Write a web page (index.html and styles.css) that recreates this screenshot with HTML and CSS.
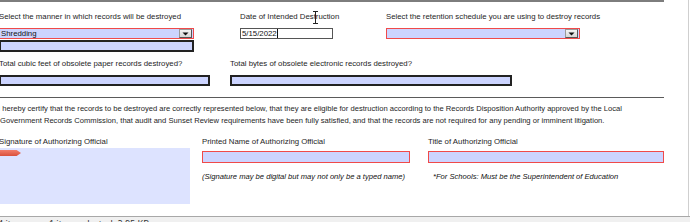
FILE: index.html
```html
<!DOCTYPE html>
<html>
<head>
<meta charset="utf-8">
<link rel="stylesheet" href="styles.css">
</head>
<body>
<div class="screen">
  <div class="sheet">
    <div class="rule top"></div>

    <div class="row row1">
      <div class="col c-manner">
        <div class="label">Select the manner in which records will be destroyed</div>
        <div class="select req">
          <span class="val">Shredding</span>
          <span class="btn"><svg width="7" height="4" viewBox="0 0 7 4"><path d="M0.5 0.5h6L3.5 3.5z" fill="#111"/></svg></span>
        </div>
        <div class="field dark tall"></div>
      </div>
      <div class="col c-date">
        <div class="label">Date of Intended Destruction</div>
        <div class="date"><span>5/15/2022</span><span class="caret"></span></div>
      </div>
      <div class="col c-sched">
        <div class="label">Select the retention schedule you are using to destroy records</div>
        <div class="select req">
          <span class="val"></span>
          <span class="btn"><svg width="7" height="4" viewBox="0 0 7 4"><path d="M0.5 0.5h6L3.5 3.5z" fill="#111"/></svg></span>
        </div>
      </div>
    </div>

    <div class="row row2">
      <div class="col c-cubic">
        <div class="label">Total cubic feet of obsolete paper records destroyed?</div>
        <div class="field dark"></div>
      </div>
      <div class="col c-bytes">
        <div class="label">Total bytes of obsolete electronic records destroyed?</div>
        <div class="field dark"></div>
      </div>
    </div>

    <div class="rule mid"></div>

    <p class="cert">I hereby certify that the records to be destroyed are correctly represented below, that they are eligible for destruction according to the Records Disposition Authority approved by the Local<br>Government Records Commission, that audit and Sunset Review requirements have been fully satisfied, and that the records are not required for any pending or imminent litigation.</p>

    <div class="row row3">
      <div class="col c-sig">
        <div class="label">Signature of Authorizing Official</div>
        <div class="sigbox"><span class="flag"></span></div>
      </div>
      <div class="col c-name">
        <div class="label">Printed Name of Authorizing Official</div>
        <div class="field req"></div>
        <div class="note">(Signature may be digital but may not only be a typed name)</div>
      </div>
      <div class="col c-title">
        <div class="label">Title of Authorizing Official</div>
        <div class="field req"></div>
        <div class="note ind">*For Schools: Must be the Superintendent of Education</div>
      </div>
    </div>
  </div>

  <div class="edge"></div>

  <div class="status">
    <span class="s1">4 items</span>
    <span class="s2">1 item selected&nbsp; 2.95 KB</span>
  </div>

  <svg class="ibeam" width="7" height="13" viewBox="0 0 7 13"><path d="M1 0.5h5M1 12.5h5M3.5 0.5v12" stroke="#222" stroke-width="1" fill="none"/></svg>
</div>
</body>
</html>
```
FILE: styles.css
```css
html, body {
  margin: 0;
  padding: 0;
  background: #fff;
}
.screen {
  position: relative;
  width: 690px;
  height: 222px;
  overflow: hidden;
  background: #fff;
  font-family: "Liberation Sans", Arial, sans-serif;
  color: #1e1e1e;
}
.sheet {
  margin-left: -1px;
  width: 665px;
}
.rule {
  width: 665px;
  background: #7d7d7d;
}
.rule.top { height: 2px; }
.rule.mid {
  height: 1px;
  background: #5a5a5a;
  margin-top: 11px;
}
.row {
  display: flex;
  align-items: flex-start;
}
.col {
  display: flex;
  flex-direction: column;
}
.label {
  font-size: 7.8px;
  line-height: 10px;
  height: 10px;
  white-space: nowrap;
  margin-bottom: 6px;
}
.row1 { margin-top: 10px; }
.c-manner { width: 195px; }
.c-date { width: 93px; margin-left: 46px; }
.c-sched { width: 194px; margin-left: 53px; }

.select {
  box-sizing: border-box;
  height: 11px;
  background: #ccd4ff;
  border: 1px solid #f04a4a;
  display: flex;
  align-items: center;
  justify-content: space-between;
}
.select .val {
  font-size: 7.8px;
  line-height: 9px;
  padding-left: 1px;
  color: #111;
}
.select .btn {
  box-sizing: border-box;
  width: 13px;
  height: 9px;
  margin-right: 1px;
  background: linear-gradient(#f4f4f4, #d6d6d6);
  border: 1px solid #9a9a9a;
  border-right-color: #555;
  border-bottom-color: #555;
  display: flex;
  align-items: center;
  justify-content: center;
}
.field {
  box-sizing: border-box;
  height: 11px;
  background: #ccd4ff;
}
.field.dark {
  border: 2px solid #222;
}
.field.tall {
  height: 12px;
  margin-top: 1px;
}
.field.req {
  border: 1px solid #f04a4a;
  height: 12px;
}
.date {
  box-sizing: border-box;
  height: 11px;
  border: 1px solid #555;
  background: #fff;
  display: flex;
  align-items: center;
  font-size: 7.8px;
  line-height: 9px;
  padding-left: 1px;
  color: #111;
}
.date .caret {
  display: inline-block;
  width: 1px;
  height: 9px;
  background: #111;
  margin-left: 0.5px;
}

.row2 { margin-top: 7px; }
.c-cubic { width: 211px; }
.c-bytes { width: 282px; margin-left: 20px; }

.cert {
  margin: 5px 0 0 0;
  font-size: 7.6px;
  line-height: 12px;
  white-space: nowrap;
  text-indent: -2px;
  padding-left: 1px;
}

.row3 { margin-top: 10px; }
.c-sig { width: 191px; }
.c-sig .label { margin-bottom: 1px; }
.sigbox {
  position: relative;
  height: 56px;
  background: #dde3ff;
}
.flag {
  position: absolute;
  left: 0;
  top: 2px;
  width: 22px;
  height: 6px;
  background: linear-gradient(#f27d6a, #d9503c);
  clip-path: polygon(0 0, 80% 0, 100% 50%, 80% 100%, 0 100%);
}
.c-name { width: 208px; margin-left: 12px; }
.c-name .label, .c-title .label { margin-bottom: 4px; }
.c-title { width: 236px; margin-left: 18px; }
.note {
  margin-top: 9px;
  font-size: 7.6px;
  line-height: 10px;
  font-style: italic;
  white-space: nowrap;
  color: #111;
}
.note.ind { padding-left: 5px; }

.edge {
  position: absolute;
  left: 688px;
  top: 0;
  width: 1px;
  height: 216px;
  background: #cfcfcf;
}
.status {
  position: absolute;
  left: 0;
  top: 216px;
  width: 690px;
  height: 20px;
  background: #f0f0f0;
  border-top: 1px solid #a8a8a8;
  font-family: "Noto Sans", sans-serif;
  font-size: 9px;
  line-height: 12px;
  color: #333;
  display: flex;
  gap: 20px;
  padding-top: 1px;
  box-sizing: border-box;
}
.status .s1 { margin-left: -2px; }
.ibeam {
  position: absolute;
  left: 312px;
  top: 11px;
}
```
